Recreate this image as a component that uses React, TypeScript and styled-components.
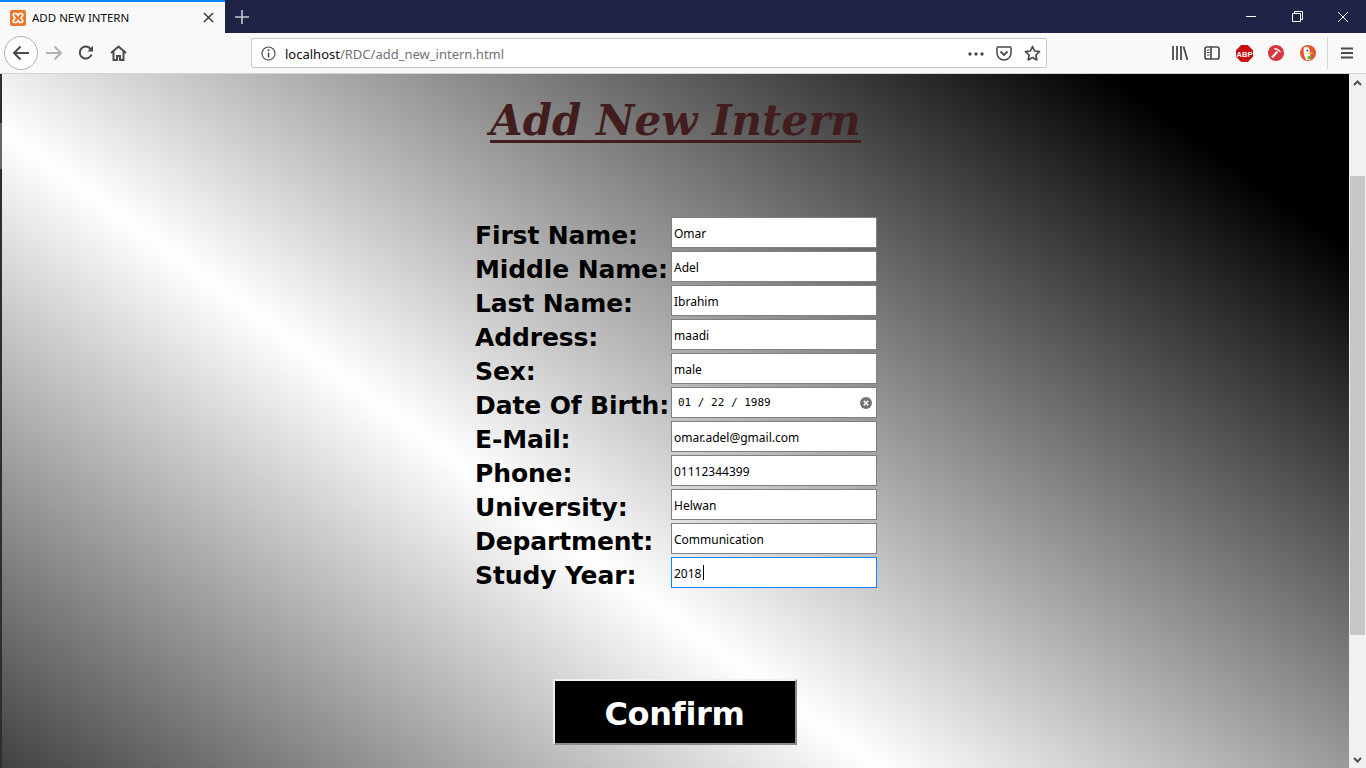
import React from "react";
import styled, { createGlobalStyle } from "styled-components";

const colours = {
    frame: "#1f2447",
    toolbar: "#f9f9fa",
    icon: "#4a4a4f",
    title: "#421d1d",
    fieldBorder: "#808080",
    focus: "#0a84ff"
};

const GlobalStyle = createGlobalStyle`
  html, body {
    margin: 0;
    height: 100%;
    overflow: hidden;
    background: #000;
  }
`;

const Window = styled.div`
  display: flex;
  flex-direction: column;
  width: 1366px;
  height: 768px;
  overflow: hidden;
  font-family: "Noto Sans", "Liberation Sans", sans-serif;
`;

const TabBar = styled.div`
  display: flex;
  align-items: flex-start;
  height: 33px;
  flex: none;
  background: ${colours.frame};
`;

const Tab = styled.div`
  display: flex;
  align-items: center;
  box-sizing: border-box;
  width: 225px;
  height: 33px;
  padding: 0 11px 0 10px;
  background: ${colours.toolbar};
  border-top: 2px solid ${colours.focus};
`;

const TabTitle = styled.span`
  flex: 1;
  margin-left: 6px;
  font-family: "Noto Sans", sans-serif;
  font-size: 11.5px;
  color: #0c0c0d;
`;

const NewTab = styled.div`
  display: flex;
  align-items: center;
  justify-content: center;
  width: 34px;
  height: 33px;
`;

const WindowButtons = styled.div`
  display: flex;
  margin-left: auto;
`;

const WindowButton = styled.div`
  display: flex;
  align-items: center;
  justify-content: center;
  width: 46px;
  height: 33px;
`;

const Toolbar = styled.div`
  display: flex;
  align-items: center;
  box-sizing: border-box;
  height: 41px;
  flex: none;
  padding-left: 4px;
  background: ${colours.toolbar};
  border-bottom: 1px solid #d4d4d6;
`;

const BackButton = styled.div`
  display: flex;
  align-items: center;
  justify-content: center;
  box-sizing: border-box;
  width: 34px;
  height: 34px;
  border: 1px solid #b1b1b3;
  border-radius: 50%;
  background: #fff;
`;

const NavButton = styled.div`
  display: flex;
  align-items: center;
  justify-content: center;
  width: 32px;
  height: 32px;
`;

const UrlBar = styled.div`
  display: flex;
  align-items: center;
  box-sizing: border-box;
  width: 796px;
  height: 30px;
  margin-left: 117px;
  padding: 1px 0 0 9px;
  background: #fff;
  border: 1px solid #c8c8c8;
  border-radius: 2px;
  font-size: 13px;
  color: #737373;
`;

const UrlText = styled.span`
  flex: 1;
  margin-left: 9px;
`;

const UrlHost = styled.span`
  color: #0c0c0d;
`;

const UrlAction = styled.div`
  display: flex;
  align-items: center;
  justify-content: center;
  width: 28px;
  height: 24px;
`;

const ToolIcons = styled.div`
  display: flex;
  align-items: center;
  margin-left: 117px;
  height: 34px;
`;

const ToolIcon = styled.div`
  display: flex;
  align-items: center;
  justify-content: center;
  width: 32px;
  height: 32px;
`;

const MenuButton = styled(ToolIcon)`
  width: 37px;
  margin-left: 3px;
  border-left: 1px solid #d6d6d7;
`;

const Viewport = styled.div`
  display: flex;
  flex: 1;
  min-height: 0;
`;

const DesktopEdge = styled.div`
  width: 2px;
  flex: none;
  background: linear-gradient(#2e2e2e 49px, #666 49px, #666 95px, #2e2e2e 95px);
`;

const Page = styled.main`
  display: flex;
  flex-direction: column;
  align-items: center;
  flex: 1;
  min-width: 0;
  background: linear-gradient(216deg, #000 141px, #fff 837px, #000 1533px);
`;

const Heading = styled.h1`
  margin: 19px 0 0;
  height: 125px;
  font-family: "DejaVu Serif", serif;
  font-size: 42px;
  line-height: 55px;
  font-weight: bold;
  font-style: italic;
  color: ${colours.title};
  text-decoration: underline;
  text-decoration-thickness: 3px;
  text-underline-offset: 5px;
`;

const Form = styled.form`
  display: flex;
  flex-direction: column;
  align-items: center;
`;

const Fields = styled.div`
  display: grid;
  grid-template-columns: 195px 206px;
  grid-auto-rows: 34px;
  margin-left: 2px;
`;

const Label = styled.label`
  margin-left: -1px;
  font-family: "DejaVu Sans", sans-serif;
  font-size: 25px;
  letter-spacing: -0.12px;
  line-height: 36px;
  font-weight: bold;
  color: #000;
  white-space: nowrap;
`;

const FieldWrap = styled.div`
  position: relative;
  height: 31px;
  margin-top: -1px;
`;

const TextField = styled.input<{ focused?: boolean }>`
  display: block;
  box-sizing: border-box;
  width: 206px;
  height: 31px;
  margin: 0;
  padding: 2px 2px 0;
  background: #fff;
  border: 1px solid ${props => props.focused ? colours.focus : colours.fieldBorder};
  border-radius: 0;
  outline: none;
  font-family: "Noto Sans", sans-serif;
  font-size: 12px;
  color: #000;
`;

const Caret = styled.span`
  position: absolute;
  left: 32px;
  top: 8px;
  width: 1px;
  height: 15px;
  background: #000;
`;

const DateField = styled.div`
  display: flex;
  align-items: center;
  justify-content: space-between;
  box-sizing: border-box;
  width: 206px;
  height: 31px;
  padding: 0 4px 0 6px;
  background: #fff;
  border: 1px solid ${colours.fieldBorder};
  font-family: "DejaVu Sans Mono", monospace;
  font-size: 11px;
  color: #000;
  white-space: pre;
`;

const ConfirmButton = styled.button`
  box-sizing: border-box;
  width: 244px;
  height: 66px;
  margin: 87px 2px 0 0;
  padding: 3px 0 0;
  background: #000;
  border: 2px solid;
  border-color: #f0f0f0 #8c8c8c #8c8c8c #f0f0f0;
  font-family: "DejaVu Sans", sans-serif;
  font-size: 32px;
  letter-spacing: -0.3px;
  font-weight: bold;
  color: #fff;
`;

const Scrollbar = styled.div`
  display: flex;
  flex-direction: column;
  align-items: center;
  width: 17px;
  flex: none;
  background: #f1f1f1;
`;

const ScrollArrow = styled.div`
  display: flex;
  align-items: center;
  justify-content: center;
  height: 17px;
  flex: none;
`;

const ScrollTrack = styled.div`
  flex: 1;
  width: 100%;
  padding-top: 85px;
  padding-bottom: 116px;
  box-sizing: border-box;
  display: flex;
`;

const ScrollThumb = styled.div`
  flex: 1;
  margin: 0 1px;
  background: #c6c6c6;
`;

const fields = [
    { label: "First Name:", value: "Omar" },
    { label: "Middle Name:", value: "Adel" },
    { label: "Last Name:", value: "Ibrahim" },
    { label: "Address:", value: "maadi" },
    { label: "Sex:", value: "male" },
    { label: "Date Of Birth:", value: "01 / 22 / 1989", date: true },
    { label: "E-Mail:", value: "omar.adel@gmail.com" },
    { label: "Phone:", value: "01112344399" },
    { label: "University:", value: "Helwan" },
    { label: "Department:", value: "Communication" },
    { label: "Study Year:", value: "2018", focused: true }
];

const XamppIcon = () => (
    <svg width="16" height="16" viewBox="0 0 16 16">
        <rect width="16" height="16" rx="2" fill="#e8762b" />
        <path d="M4 3.500h2.500L8 5.500l1.500-2H12l1 1.500-2 3 2 3-1 1.500H9.500L8 10.500l-1.500 2H4l-1-1.500 2-3-2-3z" fill="none" stroke="#fff" strokeWidth="1.600" />
    </svg>
);

const CloseIcon = ({ colour, size }: { colour: string, size: number }) => (
    <svg width={size} height={size} viewBox="0 0 12 12">
        <path d="M1 1l10 10M11 1L1 11" stroke={colour} strokeWidth={size > 11 ? 1 : 1.600} fill="none" />
    </svg>
);

const ArrowIcon = ({ colour, flip }: { colour: string, flip?: boolean }) => (
    <svg width="18" height="16" viewBox="0 0 18 16" style={flip ? { transform: "scaleX(-1)" } : undefined}>
        <path d="M17 8H2M8.500 1.500L2 8l6.500 6.500" stroke={colour} strokeWidth="2" fill="none" />
    </svg>
);

const ReloadIcon = () => (
    <svg width="16" height="16" viewBox="0 0 16 16">
        <path d="M13.500 9.500A6 6 0 1 1 12.200 3.500L14.500 5.500" stroke={colours.icon} strokeWidth="2" fill="none" />
        <path d="M15 0.800V6.500H9.300z" fill={colours.icon} />
    </svg>
);

const HomeIcon = () => (
    <svg width="17" height="16" viewBox="0 0 17 16">
        <path d="M1 8l7.500-6.500L16 8M3.500 6.500V15h3.500v-4h3v4h3.500V6.500" stroke={colours.icon} strokeWidth="2" fill="none" />
    </svg>
);

const InfoIcon = () => (
    <svg width="15" height="15" viewBox="0 0 15 15">
        <circle cx="7.500" cy="7.500" r="6.500" stroke={colours.icon} strokeWidth="1.200" fill="none" />
        <path d="M7.500 6.500V11.500" stroke={colours.icon} strokeWidth="1.500" />
        <circle cx="7.500" cy="4.200" r="1" fill={colours.icon} />
    </svg>
);

const DotsIcon = () => (
    <svg width="16" height="4" viewBox="0 0 16 4">
        <circle cx="2" cy="2" r="1.700" fill={colours.icon} />
        <circle cx="8" cy="2" r="1.700" fill={colours.icon} />
        <circle cx="14" cy="2" r="1.700" fill={colours.icon} />
    </svg>
);

const PocketIcon = () => (
    <svg width="16" height="15" viewBox="0 0 16 15">
        <path d="M2 1h12a1 1 0 0 1 1 1v5a7 7 0 0 1-14 0V2a1 1 0 0 1 1-1z" stroke={colours.icon} strokeWidth="1.500" fill="none" />
        <path d="M4.500 5.500L8 9l3.500-3.500" stroke={colours.icon} strokeWidth="1.800" fill="none" />
    </svg>
);

const StarIcon = () => (
    <svg width="17" height="17" viewBox="0 0 17 17">
        <path d="M8.500 1.500l2.100 4.500 4.900.6-3.600 3.400.9 4.900-4.300-2.400-4.300 2.400.9-4.900L1.500 6.600l4.900-.6z" stroke={colours.icon} strokeWidth="1.700" fill="none" strokeLinejoin="round" />
    </svg>
);

const LibraryIcon = () => (
    <svg width="16" height="14" viewBox="0 0 16 14">
        <path d="M1 0v14M5 0v14M9 0v14M11.500 0.500L15.500 14" stroke={colours.icon} strokeWidth="1.800" fill="none" />
    </svg>
);

const SidebarIcon = () => (
    <svg width="16" height="14" viewBox="0 0 16 14">
        <rect x="1" y="1" width="14" height="12" rx="2" stroke={colours.icon} strokeWidth="1.700" fill="none" />
        <path d="M7 1v12" stroke={colours.icon} strokeWidth="1.700" />
        <path d="M3 4h2.500M3 6.500h2.500M3 9h2.500" stroke={colours.icon} strokeWidth="1" />
    </svg>
);

const AdblockIcon = () => (
    <svg width="17" height="17" viewBox="0 0 17 17">
        <path d="M5.200 0h6.600L17 5.200v6.600L11.800 17H5.200L0 11.800V5.200z" fill="#c70d0d" />
        <text x="8.500" y="11.500" textAnchor="middle" fontFamily="Liberation Sans, sans-serif" fontSize="7.500" fontWeight="bold" fill="#fff">ABP</text>
    </svg>
);

const PickIcon = () => (
    <svg width="16" height="16" viewBox="0 0 16 16">
        <circle cx="8" cy="8" r="8" fill="#d7373f" />
        <path d="M4 12.500L9.500 6.500" stroke="#fff" strokeWidth="2" />
        <path d="M6.500 3.800C9 3.500 11 4.500 12.500 7L10.500 5.300z" fill="#fff" stroke="#fff" strokeWidth="1" />
    </svg>
);

const DuckIcon = () => (
    <svg width="16" height="16" viewBox="0 0 16 16">
        <circle cx="8" cy="8" r="8" fill="#de5833" />
        <path d="M4 2.500C7 1 9 2 9.500 4.500L10.500 14.500L6.500 15C4 12 3 6 4 2.500z" fill="#fff" />
        <path d="M8.500 7.500H13L12 9H8.500z" fill="#f5bc19" />
        <path d="M7.500 11.500l3.500-.8v3l-3.500.5z" fill="#63b32e" />
        <circle cx="7.300" cy="5.500" r="0.900" fill="#2d4f8e" />
    </svg>
);

const MenuIcon = () => (
    <svg width="14" height="12" viewBox="0 0 14 12">
        <path d="M1 1.500h12M1 6h12M1 10.500h12" stroke={colours.icon} strokeWidth="2" />
    </svg>
);

const RestoreIcon = () => (
    <svg width="11" height="11" viewBox="0 0 11 11">
        <path d="M.5 2.500h8v8h-8zM2.500 2.500v-2h8v8h-2" stroke="#fff" fill="none" />
    </svg>
);

const ClearIcon = () => (
    <svg width="12" height="12" viewBox="0 0 12 12">
        <circle cx="6" cy="6" r="6" fill="#737373" />
        <path d="M3.800 3.800l4.400 4.400M8.200 3.800L3.800 8.200" stroke="#fff" strokeWidth="1.600" />
    </svg>
);

const ChevronIcon = ({ down }: { down?: boolean }) => (
    <svg width="9" height="6" viewBox="0 0 9 6">
        <path d={down ? "M1 1l3.500 3.500L8 1" : "M1 5l3.500-3.500L8 5"} stroke="#505050" strokeWidth="2" fill="none" />
    </svg>
);

const App = () => (
    <Window>
        <GlobalStyle />
        <TabBar>
            <Tab>
                <XamppIcon />
                <TabTitle>ADD NEW INTERN</TabTitle>
                <CloseIcon colour="#38383d" size={11} />
            </Tab>
            <NewTab>
                <svg width="14" height="14" viewBox="0 0 14 14">
                    <path d="M7 0v14M0 7h14" stroke="#c8c9d2" strokeWidth="1.600" />
                </svg>
            </NewTab>
            <WindowButtons>
                <WindowButton>
                    <svg width="10" height="1" viewBox="0 0 10 1"><rect width="10" height="1" fill="#fff" /></svg>
                </WindowButton>
                <WindowButton><RestoreIcon /></WindowButton>
                <WindowButton><CloseIcon colour="#fff" size={12} /></WindowButton>
            </WindowButtons>
        </TabBar>
        <Toolbar>
            <BackButton><ArrowIcon colour={colours.icon} /></BackButton>
            <NavButton><ArrowIcon colour="#b1b1b3" flip /></NavButton>
            <NavButton><ReloadIcon /></NavButton>
            <NavButton><HomeIcon /></NavButton>
            <UrlBar>
                <InfoIcon />
                <UrlText><UrlHost>localhost</UrlHost>/RDC/add_new_intern.html</UrlText>
                <UrlAction><DotsIcon /></UrlAction>
                <UrlAction><PocketIcon /></UrlAction>
                <UrlAction><StarIcon /></UrlAction>
            </UrlBar>
            <ToolIcons>
                <ToolIcon><LibraryIcon /></ToolIcon>
                <ToolIcon><SidebarIcon /></ToolIcon>
                <ToolIcon><AdblockIcon /></ToolIcon>
                <ToolIcon><PickIcon /></ToolIcon>
                <ToolIcon><DuckIcon /></ToolIcon>
                <MenuButton><MenuIcon /></MenuButton>
            </ToolIcons>
        </Toolbar>
        <Viewport>
            <DesktopEdge />
            <Page>
                <Heading>Add New Intern</Heading>
                <Form>
                    <Fields>
                        {fields.map(field => (
                            <React.Fragment key={field.label}>
                                <Label>{field.label}</Label>
                                <FieldWrap>
                                    {field.date
                                        ? <DateField><span>{field.value}</span><ClearIcon /></DateField>
                                        : <TextField readOnly defaultValue={field.value} focused={field.focused} />}
                                    {field.focused && <Caret />}
                                </FieldWrap>
                            </React.Fragment>
                        ))}
                    </Fields>
                    <ConfirmButton type="button">Confirm</ConfirmButton>
                </Form>
            </Page>
            <Scrollbar>
                <ScrollArrow><ChevronIcon /></ScrollArrow>
                <ScrollTrack><ScrollThumb /></ScrollTrack>
                <ScrollArrow><ChevronIcon down /></ScrollArrow>
            </Scrollbar>
        </Viewport>
    </Window>
);

export default App;
